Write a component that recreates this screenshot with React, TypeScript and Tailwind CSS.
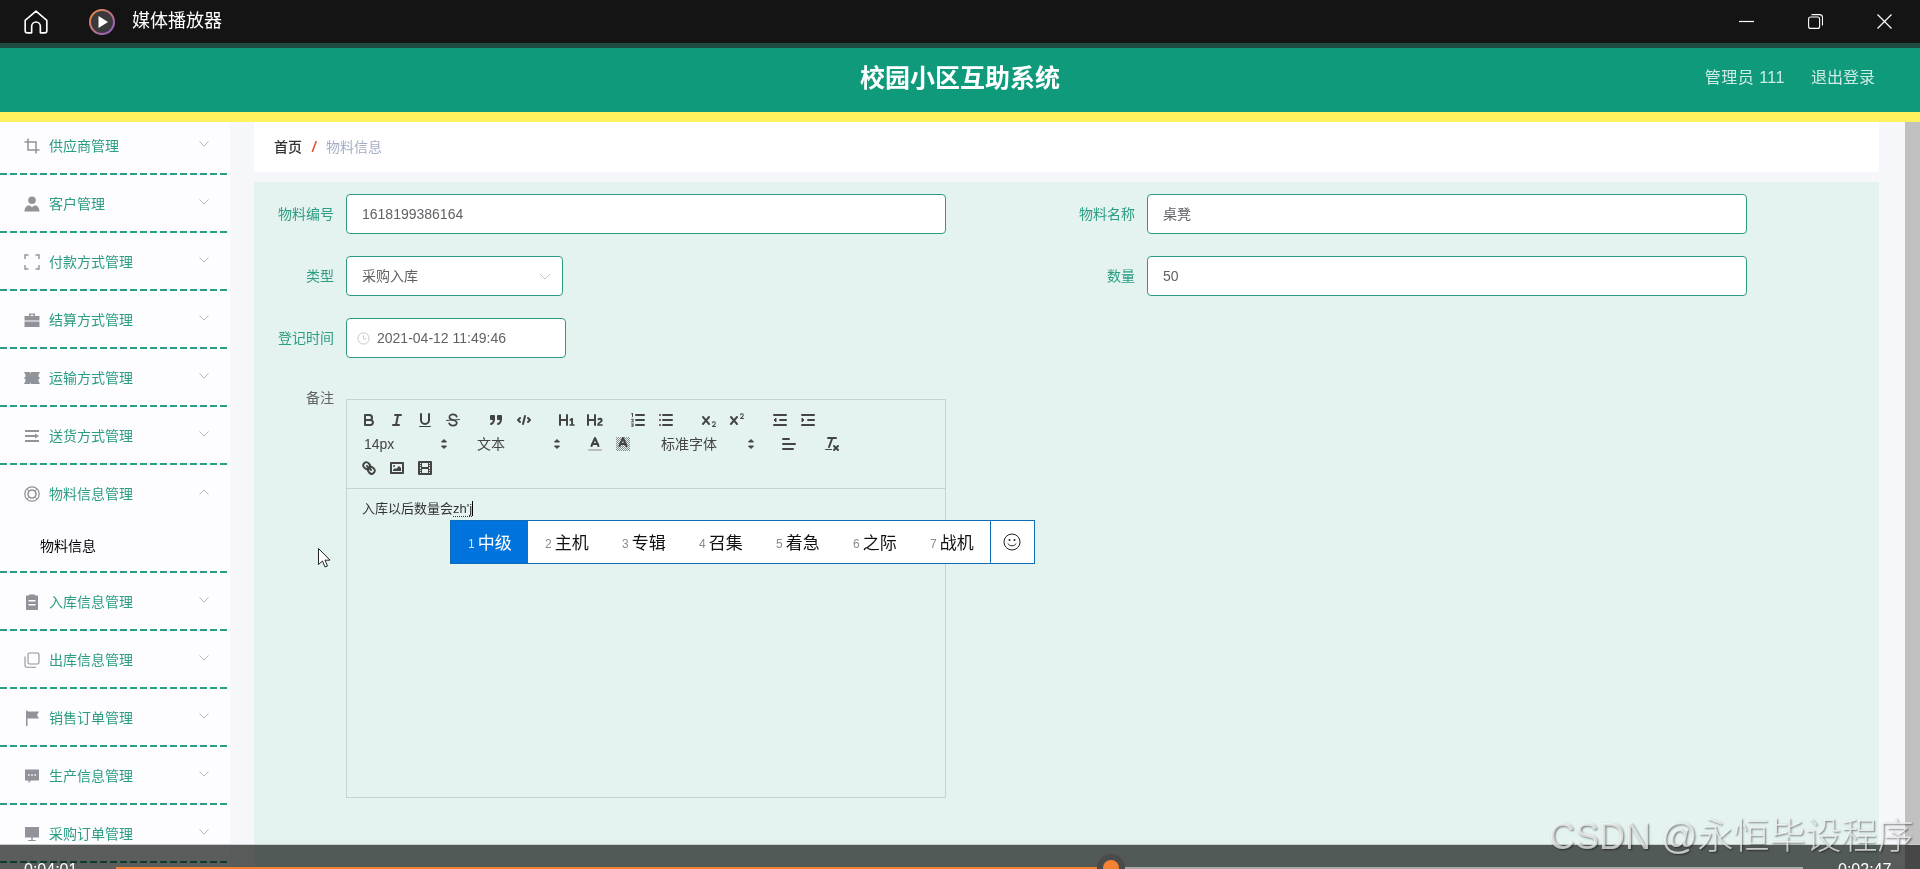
import React from "react";

const S = { fill: "none", stroke: "#444", strokeWidth: 2, strokeLinecap: "round" as const, strokeLinejoin: "round" as const };
const F = { fill: "#444" };
const X = "M9.65,5.241a1,1,0,0,0-1.409.108L6,7.964,3.759,5.349A1,1,0,0,0,2.192,6.59178Q2.21541,6.6213,2.241,6.649L4.684,9.5,2.241,12.35A1,1,0,0,0,3.71,13.70722q0.02557-.02768.049-0.05722L6,11.036,8.241,13.65a1,1,0,1,0,1.567-1.24277Q9.78459,12.3777,9.759,12.35L7.316,9.5,9.759,6.651A1,1,0,0,0,9.65,5.241Z";

function Q({ children, mr }: { children: React.ReactNode; mr?: boolean }) {
  return (
    <span className={`flex h-6 w-7 shrink-0 items-center justify-center ${mr ? "mr-[15px]" : ""}`}>
      <svg viewBox="0 0 18 18" className="h-[18px] w-[18px]">{children}</svg>
    </span>
  );
}

function Picker({ label, w }: { label: string; w: string }) {
  return (
    <span className={`relative mr-[15px] flex h-6 shrink-0 items-center pl-[9px] text-[14px] text-[#444] ${w}`}>
      {label}
      <svg viewBox="0 0 18 18" className="absolute right-0 top-[3px] h-[18px] w-[18px]">
        <polygon points="6.5 11 9 13.500 11.500 11" fill="#444" stroke="#444" strokeLinejoin="round" />
        <polygon points="6.5 7 9 4.500 11.500 7" fill="#444" stroke="#444" strokeLinejoin="round" />
      </svg>
    </span>
  );
}

function Toolbar() {
  return (
    <div className="h-[89px] border-b border-[#c8d2cf] px-2 py-2">
      <div className="flex h-6">
        <Q><g {...S}><path d="M5,4H9.5A2.5,2.5,0,0,1,12,6.5v0A2.5,2.5,0,0,1,9.5,9H5V4Z" /><path d="M5,9h5.5A2.5,2.5,0,0,1,13,11.5v0A2.5,2.5,0,0,1,10.5,14H5V9Z" /></g></Q>
        <Q><g {...S}><line x1="7" x2="13" y1="4" y2="4" /><line x1="5" x2="11" y1="14" y2="14" /><line x1="8" x2="10" y1="14" y2="4" /></g></Q>
        <Q><path {...S} d="M5,3V9a4.012,4.012,0,0,0,4,4H9a4.012,4.012,0,0,0,4-4V3" /><rect {...F} height="1" rx=".5" ry=".5" width="12" x="3" y="15" /></Q>
        <Q mr><path {...S} strokeWidth={1.7} d="M12.7 5.6C12.2 4.2 10.8 3.4 9 3.4c-2.1 0-3.6 1.1-3.6 2.8 0 3.6 7.4 2 7.4 5.6 0 1.7-1.6 2.8-3.8 2.8-1.9 0-3.4-.9-3.9-2.3" /><line {...S} strokeWidth={1} x1="15.5" x2="2.5" y1="8.5" y2="9.5" /></Q>
        <Q><g {...S} fill="#444"><rect height="3" width="3" x="4" y="5" /><rect height="3" width="3" x="11" y="5" /><path fill="none" d="M7,8c0,4.031-3,5-3,5" /><path fill="none" d="M14,8c0,4.031-3,5-3,5" /></g></Q>
        <Q mr><g {...S}><polyline points="5 7 3 9 5 11" /><polyline points="13 7 15 9 13 11" /><line x1="10" x2="8" y1="5" y2="13" /></g></Q>
        <Q><path {...F} d="M10,4V14a1,1,0,0,1-2,0V10H3v4a1,1,0,0,1-2,0V4A1,1,0,0,1,3,4V8H8V4a1,1,0,0,1,2,0Zm6.06787,9.209H14.98975V7.59863a.54085.54085,0,0,0-.605-.60547h-.62744a1.01119,1.01119,0,0,0-.748.29688L11.645,8.56641a.5435.5435,0,0,0-.022.8584l.28613.30762a.53861.53861,0,0,0,.84717.0332l.09912-.08789a1.2137,1.2137,0,0,0,.2417-.35254h.02246s-.01123.30859-.01123.60547V13.209H12.041a.54085.54085,0,0,0-.605.60547v.43945a.54085.54085,0,0,0,.605.60547h4.02686a.54085.54085,0,0,0,.605-.60547v-.43945A.54085.54085,0,0,0,16.06787,13.209Z" /></Q>
        <Q mr><path {...F} d="M16.73975,13.81445v.43945a.54085.54085,0,0,1-.605.60547H11.855a.58392.58392,0,0,1-.64893-.60547V14.0127c0-2.90527,3.39941-3.42187,3.39941-4.55469a.77675.77675,0,0,0-.84717-.78125,1.17684,1.17684,0,0,0-.83594.38477c-.2749.26367-.561.374-.85791.13184l-.4292-.34082c-.30811-.24219-.38525-.51758-.1543-.81445a2.97155,2.97155,0,0,1,2.45361-1.17676,2.45393,2.45393,0,0,1,2.68408,2.40918c0,2.45312-3.1792,2.92676-3.27832,3.93848h2.79443A.54085.54085,0,0,1,16.73975,13.81445ZM9,3A.99974.99974,0,0,0,8,4V8H3V4A1,1,0,0,0,1,4V14a1,1,0,0,0,2,0V10H8v4a1,1,0,0,0,2,0V4A.99974.99974,0,0,0,9,3Z" /></Q>
        <Q><g {...S}><line x1="7" x2="15" y1="4" y2="4" /><line x1="7" x2="15" y1="9" y2="9" /><line x1="7" x2="15" y1="14" y2="14" /></g><path {...F} d="M3.5,6A0.5,0.5,0,0,1,3,5.5V3.085l-0.276.138A0.5,0.5,0,0,1,2.053,3c-0.124-.247-0.023-0.324.224-0.447l1-.5A0.5,0.5,0,0,1,4,2.5v3A0.5,0.5,0,0,1,3.5,6Z" /><path {...S} strokeWidth={1} d="M2.5 8.2h1.6c.5 0 .5 1.2-.4 1.5L2.5 10.8h2M2.5 13h2l-1.2 1.2c1 0 1.3.3 1.2.8-.1.6-1.4.7-2 .3" /></Q>
        <Q mr><g {...S}><line x1="6" x2="15" y1="4" y2="4" /><line x1="6" x2="15" y1="9" y2="9" /><line x1="6" x2="15" y1="14" y2="14" /><line x1="3" x2="3" y1="4" y2="4" /><line x1="3" x2="3" y1="9" y2="9" /><line x1="3" x2="3" y1="14" y2="14" /></g></Q>
        <Q><path {...F} d="M15.5,15H13.861a3.858,3.858,0,0,0,1.914-2.975,1.8,1.8,0,0,0-1.6-1.751A1.921,1.921,0,0,0,12.021,11.7a0.50013,0.50013,0,1,0,.957.291h0a0.914,0.914,0,0,1,1.053-.725,0.81,0.81,0,0,1,.744.762c0,1.076-1.16971,1.86982-1.93971,2.43082A1.45639,1.45639,0,0,0,12,15.5a0.5,0.5,0,0,0,.5.5h3A0.5,0.5,0,0,0,15.5,15Z" /><path {...F} d={X} /></Q>
        <Q mr><path {...F} d="M15.5,7H13.861a4.015,4.015,0,0,0,1.914-2.975,1.8,1.8,0,0,0-1.6-1.751A1.922,1.922,0,0,0,12.021,3.7a0.5,0.5,0,1,0,.957.291,0.917,0.917,0,0,1,1.053-.725,0.81,0.81,0,0,1,.744.762c0,1.077-1.164,1.925-1.934,2.486A1.423,1.423,0,0,0,12,7.5a0.5,0.5,0,0,0,.5.5h3A0.5,0.5,0,0,0,15.5,7Z" /><path {...F} d={X} /></Q>
        <Q><g {...S}><line x1="3" x2="15" y1="14" y2="14" /><line x1="3" x2="15" y1="4" y2="4" /><line x1="9" x2="15" y1="9" y2="9" /></g><polygon {...F} stroke="#444" strokeLinejoin="round" points="5 7 5 11 3 9 5 7" /></Q>
        <Q><g {...S}><line x1="3" x2="15" y1="14" y2="14" /><line x1="3" x2="15" y1="4" y2="4" /><line x1="9" x2="15" y1="9" y2="9" /></g><polygon {...F} stroke="#444" strokeLinejoin="round" points="3 7 3 11 5 9 3 7" /></Q>
      </div>
      <div className="flex h-6">
        <Picker label="14px" w="w-[98px]" />
        <Picker label="文本" w="w-[98px]" />
        <Q><g {...S}><line x1="3" x2="15" y1="15" y2="15" stroke="#bbb" /><polyline points="5.5 11 9 3 12.5 11" /><line x1="11.63" x2="6.38" y1="9" y2="9" /></g></Q>
        <Q mr>
          <defs><pattern id="chk" width="2" height="2" patternUnits="userSpaceOnUse"><rect width="1" height="1" fill="#555" /><rect x="1" y="1" width="1" height="1" fill="#555" /></pattern></defs>
          <rect x="2" y="2" width="14" height="14" fill="url(#chk)" opacity="0.65" />
          <g {...S}><polyline points="5.5 11 9 3 12.5 11" /><line x1="11.63" x2="6.38" y1="9" y2="9" /></g>
        </Q>
        <Picker label="标准字体" w="w-[108px]" />
        <Q mr><g {...S}><line x1="3" x2="15" y1="9" y2="9" /><line x1="3" x2="13" y1="14" y2="14" /><line x1="3" x2="9" y1="4" y2="4" /></g></Q>
        <Q><g {...S}><line x1="5" x2="13" y1="3" y2="3" /><line x1="6" x2="9.35" y1="12" y2="3" /><line x1="11" x2="15" y1="11" y2="15" /><line x1="15" x2="11" y1="11" y2="15" /></g><rect {...F} height="1" rx=".5" ry=".5" width="7" x="2" y="14" /></Q>
      </div>
      <div className="flex h-6">
        <Q><g {...S}><line x1="7" x2="11" y1="7" y2="11" /><path d="M8.9,4.577a3.476,3.476,0,0,1,.36,4.679A3.476,3.476,0,0,1,4.577,8.9C3.185,7.5,2.035,6.4,4.217,4.217S7.5,3.185,8.9,4.577Z" /><path d="M13.423,9.1a3.476,3.476,0,0,0-4.679-.36,3.476,3.476,0,0,0,.36,4.679c1.392,1.392,2.5,2.542,4.679.36S14.815,10.5,13.423,9.1Z" /></g></Q>
        <Q><rect {...S} height="10" width="12" x="3" y="4" /><circle {...F} cx="6" cy="7" r="1" /><polyline {...F} points="5 12 5 11 7 9 8 10 11 7 13 9 13 12 5 12" /></Q>
        <Q><rect {...S} height="12" width="12" x="3" y="3" /><g {...F}><rect height="12" width="1" x="5" y="3" /><rect height="12" width="1" x="12" y="3" /><rect height="2" width="8" x="5" y="8" /><rect height="1" width="3" x="3" y="5" /><rect height="1" width="3" x="3" y="7" /><rect height="1" width="3" x="3" y="10" /><rect height="1" width="3" x="3" y="12" /><rect height="1" width="3" x="12" y="5" /><rect height="1" width="3" x="12" y="7" /><rect height="1" width="3" x="12" y="10" /><rect height="1" width="3" x="12" y="12" /></g></Q>
      </div>
    </div>
  );
}

const G = "#909399";
const icons: Record<string, React.ReactNode> = {
  crop: <path d="M4 .5v11.500h11.500M.5 4H12v11.500" fill="none" stroke={G} strokeWidth="1.500" />,
  user: <path fill={G} d="M8 .5a3.800 3.800 0 1 1 0 7.600A3.800 3.800 0 0 1 8 .5ZM.5 15.500c0-3.800 2.400-6 4.800-6.200L8 11.200l2.700-1.900c2.400.2 4.800 2.400 4.800 6.200Z" />,
  full: <path d="M1 5V1h3.500M11.500 1H15v4M15 11v4h-3.500M4.500 15H1v-4" fill="none" stroke={G} strokeWidth="1.400" />,
  case: <path fill={G} fillRule="evenodd" d="M5 4V1.500h6V4h4.500v4.500H.5V4ZM6.500 2.800V4h3V2.800ZM.5 9.500h15V15H.5Z" />,
  ticket: <path fill={G} d="M0 2h5.800l.5 2 .5-2H16l-1.500 3v1.500L16 8l-1.500 1.500V11L16 14H6.800l-.5-2-.5 2H0l1.500-3V9.500L0 8l1.500-1.500V5Z" />,
  ops: <path fill={G} d="M1 2h14v2H1ZM1 7h10V5.500l4 2.500-4 2.500V9H1ZM1 12h14v2H1Z" />,
  help: <g fill="none" stroke={G}><circle cx="8" cy="8" r="7.200" strokeWidth="1.300" /><circle cx="8" cy="8" r="4" strokeWidth="1.600" /><path d="M3 3l2.300 2.300M13 3l-2.300 2.300M3 13l2.300-2.300M13 13l-2.300-2.300" strokeWidth="1" /></g>,
  clip: <path fill={G} fillRule="evenodd" d="M5 1.500V.5h6v1h3V16H2V1.500ZM4.500 6v1.500h7V6Zm0 4v1.500h7V10Z" />,
  copy: <g fill="none" stroke={G} strokeWidth="1.100"><rect x="4" y="1" width="11" height="11" rx="1.500" /><path d="M1 4.500v9C1 14.500 1.700 15.200 2.700 15.200H12" /></g>,
  flag: <path fill={G} d="M2 .5h1.500V16H2ZM3.500 1.500H15l-2 3.500 2 3.500H3.500Z" />,
  chat: <path fill={G} fillRule="evenodd" d="M1 1.500h14v11H7L4.500 15v-2.500H1ZM4 6.200h1.600v1.600H4Zm3.200 0h1.600v1.600H7.200Zm3.200 0H12v1.600h-1.600Z" />,
  screen: <path fill={G} d="M1 1h14v10.500H1ZM7.300 11.500h1.400V14h3v1h-7.500v-1h3.100Z" />,
};

function Chevron({ up }: { up?: boolean }) {
  return (
    <svg viewBox="0 0 10 6" className="absolute left-[199px] top-[24px] h-[6px] w-[10px]">
      <path d={up ? "M.5 5.500 5 1l4.500 4.500" : "M.5.5 5 5 9.500.5"} fill="none" stroke="#b5b8bf" strokeWidth="1" />
    </svg>
  );
}

function Row({ icon, label, up, first }: { icon: string; label: string; up?: boolean; first?: boolean }) {
  return (
    <div className={`relative flex h-[56px] shrink-0 items-center pl-6 pt-[2px] text-[14px] text-[#2a9d82] ${first ? "-mt-[5px]" : ""}`}>
      <svg viewBox="0 0 16 16" className="mr-[9px] h-4 w-4 shrink-0">{icons[icon]}</svg>
      {label}
      <Chevron up={up} />
    </div>
  );
}

function Dash() {
  return <div className="h-[2px] shrink-0 bg-[repeating-linear-gradient(90deg,#2a9d82_0,#2a9d82_7px,transparent_7px,transparent_10px)]" />;
}

const menu: [string, string][] = [
  ["crop", "供应商管理"], ["user", "客户管理"], ["full", "付款方式管理"], ["case", "结算方式管理"], ["ticket", "运输方式管理"], ["ops", "送货方式管理"],
];
const menu2: [string, string][] = [
  ["clip", "入库信息管理"], ["copy", "出库信息管理"], ["flag", "销售订单管理"], ["chat", "生产信息管理"], ["screen", "采购订单管理"],
];

function Sidebar() {
  return (
    <aside className="flex w-[230px] shrink-0 flex-col overflow-hidden bg-[#fdfcff]">
      {menu.map(([i, l], n) => (
        <React.Fragment key={l}>
          <Row icon={i} label={l} first={n === 0} />
          <Dash />
        </React.Fragment>
      ))}
      <Row icon="help" label="物料信息管理" up />
      <div className="flex h-[50px] shrink-0 items-center pl-10 text-[14px] text-black">物料信息</div>
      <Dash />
      {menu2.map(([i, l]) => (
        <React.Fragment key={l}>
          <Row icon={i} label={l} />
          <Dash />
        </React.Fragment>
      ))}
    </aside>
  );
}

const inputBase = "flex h-10 items-center rounded border border-[#2f9a83] bg-white text-[14px] text-[#606266]";

function Field({ label, children }: { label: string; children: React.ReactNode }) {
  return (
    <div className="mb-[22px] flex items-center">
      <div className="w-20 shrink-0 text-right text-[14px] text-[#2a9d82]">{label}</div>
      <div className="ml-3">{children}</div>
    </div>
  );
}

function Form() {
  return (
    <div className="mt-[10px] flex-1 bg-[#e4f3f0] pt-3">
      <div className="grid grid-cols-[801px_1fr]">
        <Field label="物料编号"><div className={`${inputBase} w-[600px] pl-[15px]`}>1618199386164</div></Field>
        <Field label="物料名称"><div className={`${inputBase} w-[600px] pl-[15px]`}>桌凳</div></Field>
        <Field label="类型">
          <div className={`${inputBase} relative w-[217px] pl-[15px] text-[#2a9d82]`}>
            采购入库
            <svg viewBox="0 0 12 7" className="absolute right-[11px] top-[16px] h-[7px] w-3"><path d="M1 1l5 5 5-5" fill="none" stroke="#c0c4cc" strokeWidth="1" /></svg>
          </div>
        </Field>
        <Field label="数量"><div className={`${inputBase} w-[600px] pl-[15px]`}>50</div></Field>
        <Field label="登记时间">
          <div className={`${inputBase} w-[220px] pl-[10px]`}>
            <svg viewBox="0 0 14 14" className="mr-[7px] h-[13px] w-[13px]"><g fill="none" stroke="#c0c4cc" strokeWidth="1"><circle cx="7" cy="7" r="6" /><path d="M7 3.500V7.500h3" /></g></svg>
            2021-04-12 11:49:46
          </div>
        </Field>
      </div>
      <div className="mt-[19px] flex items-start">
        <div className="w-20 shrink-0 text-right text-[14px] leading-[0px] text-[#606266]"><span className="relative block h-0 translate-y-[-1px]">备注</span></div>
        <div className="ml-3 h-[399px] w-[600px] border border-[#c8d2cf]">
          <Toolbar />
          <div className="px-[15px] pt-[9px] text-[13px] leading-[19px] text-[#333]">
            入库以后数量会<span className="border-b border-dotted border-[#333]">zh'j</span><span className="inline-block h-[15px] w-px translate-y-[3px] bg-black" />
          </div>
        </div>
      </div>
    </div>
  );
}

function Ime() {
  const items = ["主机", "专辑", "召集", "着急", "之际", "战机"];
  return (
    <div className="absolute left-[450px] top-[520px] flex h-11 w-[585px] items-center border border-[#0f6cb8] bg-white text-[17px] text-[#111]">
      <div className="flex h-full w-[77px] items-center bg-[#0073dd] pl-[17px] pt-[3px] text-white">
        <span className="mr-[3px] text-[12px] text-[#cfe6ff]">1</span>中级
      </div>
      {items.map((t, i) => (
        <div key={t} className="flex w-[77px] items-center pl-[17px] pt-[3px]">
          <span className="mr-[3px] text-[12px] text-[#8c8c8c]">{i + 2}</span>{t}
        </div>
      ))}
      <div className="flex h-full flex-1 items-center justify-center border-l border-[#0f6cb8]">
        <svg viewBox="0 0 18 18" className="h-[18px] w-[18px] -translate-x-[1px]"><g fill="none" stroke="#222" strokeWidth="1"><circle cx="9" cy="9" r="8" /><path d="M5 10.500c1 3 7 3 8 0" /></g><circle cx="6.500" cy="7" r="1" fill="#222" /><circle cx="11.500" cy="7" r="1" fill="#222" /></svg>
      </div>
    </div>
  );
}

export default function App() {
  return (
    <div className="relative flex h-[869px] w-full flex-col overflow-hidden bg-[#f6f7fb] font-['Liberation_Sans','Noto_Sans_CJK_SC',sans-serif]">
      <div className="flex h-[43px] shrink-0 items-center bg-[#141414] text-white">
        <svg viewBox="0 0 24 24" className="ml-[23px] h-[26px] w-[26px]"><path d="M2 10.500 12 2l10 8.500V20a2 2 0 0 1-2 2h-4v-6a4 4 0 0 0-8 0v6H4a2 2 0 0 1-2-2Z" fill="none" stroke="#fff" strokeWidth="1.500" strokeLinejoin="round" /></svg>
        <svg viewBox="0 0 26 26" className="ml-[40px] h-[26px] w-[26px]">
          <defs><linearGradient id="lg" x1="0" y1="0" x2="1" y2="1"><stop offset="0" stopColor="#f08a3c" /><stop offset="1" stopColor="#8e5bd0" /></linearGradient></defs>
          <circle cx="13" cy="13" r="12" fill="#3a3a3a" stroke="url(#lg)" strokeWidth="2" />
          <path d="M9.500 7 19 13l-9.500 6Z" fill="#fff" />
        </svg>
        <span className="ml-[17px] text-[18px]">媒体播放器</span>
        <div className="ml-auto flex items-center pr-[28px]">
          <svg viewBox="0 0 15 15" className="h-[15px] w-[15px]"><path d="M0 7.500h15" stroke="#fff" strokeWidth="1.200" /></svg>
          <svg viewBox="0 0 15 15" className="ml-[54px] h-[15px] w-[15px]"><g fill="none" stroke="#fff" strokeWidth="1.100"><rect x=".6" y="3" width="11" height="11.400" rx="2" /><path d="M3.500.6h8c1.600 0 3 1.400 3 3v8" /></g></svg>
          <svg viewBox="0 0 15 15" className="ml-[54px] h-[15px] w-[15px]"><path d="M.5.5l14 14M14.500.5l-14 14" stroke="#fff" strokeWidth="1.200" /></svg>
        </div>
      </div>
      <div className="h-[5px] shrink-0 bg-[#1f4a42]" />
      <header className="relative flex h-[64px] shrink-0 items-center justify-center bg-[#0f9a7c] pb-[3px]">
        <h1 className="text-[25px] font-bold text-white">校园小区互助系统</h1>
        <div className="absolute right-[45px] top-[18px] flex gap-[26px] text-[16px] leading-[24px] text-white/80">
          <span className="tracking-[0.5px]">管理员 111</span>
          <span>退出登录</span>
        </div>
      </header>
      <div className="h-[10px] shrink-0 bg-[#fff25f]" />
      <div className="flex min-h-0 flex-1">
        <Sidebar />
        <main className="flex min-w-0 flex-1 flex-col pl-6 pr-[26px]">
          <div className="flex h-[50px] shrink-0 items-center rounded-b bg-white pl-5 text-[14px]">
            <span className="font-medium text-[#303133]">首页</span>
            <span className="mx-[10px] font-bold italic text-[#e2542c]">/</span>
            <span className="text-[#a3adc2]">物料信息</span>
          </div>
          <Form />
        </main>
        <div className="w-[15px] shrink-0 bg-[#c1c1c1]" />
      </div>

      <Ime />

      <svg viewBox="0 0 12 20" className="absolute left-[318px] top-[548px] h-5 w-3"><path d="M.5.5v16l4-3.500 2.500 6 2.500-1-2.500-5.800h5Z" fill="#fff" stroke="#222" strokeWidth="1" /></svg>

      <div className="absolute inset-x-0 bottom-0 h-[25px] bg-[#5c5e5c] mix-blend-multiply" />
      <div className="absolute inset-x-0 top-[844px] h-[1px] bg-[#c9cdcb]" />
      <span className="absolute left-[24px] top-[861px] text-[16px] leading-[18px] text-white">0:04:01</span>
      <span className="absolute left-[1838px] top-[861px] text-[16px] leading-[18px] text-white">0:02:47</span>
      <div className="absolute left-[116px] top-[867px] h-[3px] w-[994px] bg-[#f58233]" />
      <div className="absolute left-[1110px] top-[867px] h-[3px] w-[693px] bg-[#a9aaa9]" />
      <div className="absolute left-[1097px] top-[854px] flex h-[28px] w-[28px] items-center justify-center rounded-full bg-[#4a4a4a]">
        <div className="h-4 w-4 rounded-full bg-[#f58233]" />
      </div>

      <div className="absolute left-[1549px] top-[812px] whitespace-nowrap text-[36px] font-light leading-[50px] text-white/70 [text-shadow:1px_1px_2px_rgba(0,0,0,0.5)]">CSDN @永恒毕设程序</div>
    </div>
  );
}
